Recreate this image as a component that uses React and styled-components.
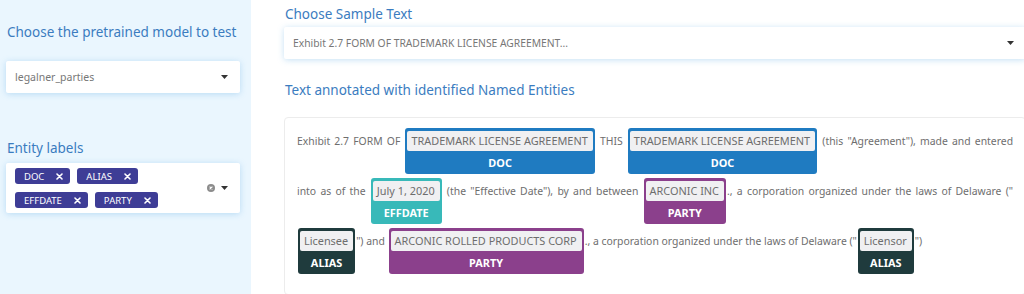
import React from 'react'
import styled, { createGlobalStyle } from 'styled-components'

const GlobalStyle = createGlobalStyle`
  html, body {
    margin: 0;
    padding: 0;
    background: #fff;
    overflow: hidden;
  }
  body {
    font-family: "Noto Sans", "Liberation Sans", sans-serif;
  }
`

const ENTITY_COLORS = {
  DOC: '#1f7bc1',
  EFFDATE: '#38b9b9',
  PARTY: '#8b408c',
  ALIAS: '#1f3b3d',
}

const Page = styled.div`
  display: flex;
  width: 1024px;
  height: 294px;
  overflow: hidden;
`

const Sidebar = styled.aside`
  flex: none;
  width: 251px;
  box-sizing: border-box;
  padding: 22px 11px 0 6px;
  background: #eaf6fe;
  display: flex;
  flex-direction: column;
`

const Main = styled.main`
  flex: none;
  width: 775px;
  box-sizing: border-box;
  padding: 4px 0 0 33px;
  display: flex;
  flex-direction: column;
`

const Heading = styled.h3`
  margin: ${p => p.$top || 0}px 0 0;
  padding-left: 1px;
  font-size: 13.5px;
  font-weight: 400;
  line-height: 20px;
  color: #3b7cc0;
`

const SelectBox = styled.div`
  display: flex;
  align-items: center;
  gap: 6px;
  min-height: 32px;
  box-sizing: border-box;
  margin-top: ${p => p.$top || 0}px;
  padding: ${p => (p.$multi ? '5px 12px 5px 9px' : '0 12px 0 9px')};
  background: #fff;
  border-radius: 2px;
  box-shadow: 0 1px 6px rgba(110, 180, 230, 0.4);
`

const SelectValue = styled.div`
  flex: 1;
  font-size: ${p => p.$size || 10.5}px;
  color: #777;
  white-space: nowrap;
  overflow: hidden;
`

const TagArea = styled.div`
  flex: 1;
  display: flex;
  flex-wrap: wrap;
  gap: 8px 7px;
  padding-right: 16px;
`

const Tag = styled.span`
  display: inline-flex;
  align-items: center;
  gap: 12px;
  height: 16px;
  padding: 0 7px 0 9px;
  border-radius: 3px;
  background: #3e3d96;
  color: #fff;
  font-size: 9.5px;
`

const Icons = styled.div`
  display: flex;
  align-items: center;
  gap: 6px;
`

const Annotated = styled.div`
  margin-top: 17px;
  border: 1px solid #ececec;
  border-radius: 4px;
  padding: 6px 12px 20px;
  font-size: 10.4px;
  line-height: 34px;
  color: #6e6e6e;
  text-align: justify;
`

const Entity = styled.span`
  display: inline-flex;
  flex-direction: column;
  margin: 0 1px;
  padding: 3px 2px 0;
  border-radius: 3px;
  background: ${p => p.$color};
  font-size: 10.9px;
  line-height: normal;
  vertical-align: baseline;
`

const EntityText = styled.span`
  padding: 0 5px 0 4px;
  border-radius: 2px;
  background: #f0f0f2;
  color: #6d6d6d;
  line-height: 20px;
  white-space: nowrap;
`

const EntityLabel = styled.span`
  text-align: center;
  color: #fff;
  font-weight: 700;
  line-height: 23px;
`

const Caret = () => (
  <svg width="7" height="4" viewBox="0 0 7 4">
    <path d="M0 0 L7 0 L3.5 4 Z" fill="#333" />
  </svg>
)

const Cross = ({ size = 7, color = '#fff', width = 1.6 }) => (
  <svg width={size} height={size} viewBox="0 0 7 7">
    <path d="M1 1 L6 6 M6 1 L1 6" stroke={color} strokeWidth={width} strokeLinecap="round" />
  </svg>
)

const ClearIcon = () => (
  <svg width="8" height="8" viewBox="0 0 8 8">
    <circle cx="4" cy="4" r="4" fill="#8c8c8c" />
    <path d="M2.6 2.6 L5.4 5.4 M5.4 2.6 L2.6 5.4" stroke="#fff" strokeWidth="1.1" />
  </svg>
)

const Ent = ({ label, children }) => (
  <Entity $color={ENTITY_COLORS[label]}>
    <EntityText>{children}</EntityText>
    <EntityLabel>{label}</EntityLabel>
  </Entity>
)

const labels = ['DOC', 'ALIAS', 'EFFDATE', 'PARTY']

export default function App() {
  return (
    <Page>
      <GlobalStyle />
      <Sidebar>
        <Heading>Choose the pretrained model to test</Heading>
        <SelectBox $top={19}>
          <SelectValue>legalner_parties</SelectValue>
          <Caret />
        </SelectBox>
        <Heading $top={45}>Entity labels</Heading>
        <SelectBox $top={5} $multi>
          <TagArea>
            {labels.map(l => (
              <Tag key={l}>
                {l}
                <Cross />
              </Tag>
            ))}
          </TagArea>
          <Icons>
            <ClearIcon />
            <Caret />
          </Icons>
        </SelectBox>
      </Sidebar>
      <Main>
        <Heading>Choose Sample Text</Heading>
        <SelectBox $top={3}>
          <SelectValue $size={10.3}>Exhibit 2.7 FORM OF TRADEMARK LICENSE AGREEMENT...</SelectValue>
          <Caret />
        </SelectBox>
        <Heading $top={21}>Text annotated with identified Named Entities</Heading>
        <Annotated>
          Exhibit 2.7 FORM OF <Ent label="DOC">TRADEMARK LICENSE AGREEMENT</Ent> THIS{' '}
          <Ent label="DOC">TRADEMARK LICENSE AGREEMENT</Ent> (this "Agreement"), made and entered{' '}
          <wbr />
          into as of the <Ent label="EFFDATE">July 1, 2020</Ent> (the "Effective Date"), by and
          between <Ent label="PARTY">ARCONIC INC</Ent>., a corporation organized under the laws of
          Delaware ("<wbr />
          <Ent label="ALIAS">Licensee</Ent>") and <Ent label="PARTY">ARCONIC ROLLED PRODUCTS CORP</Ent>.,
          a corporation organized under the laws of Delaware ("<wbr />
          <Ent label="ALIAS">Licensor</Ent>")
        </Annotated>
      </Main>
    </Page>
  )
}
